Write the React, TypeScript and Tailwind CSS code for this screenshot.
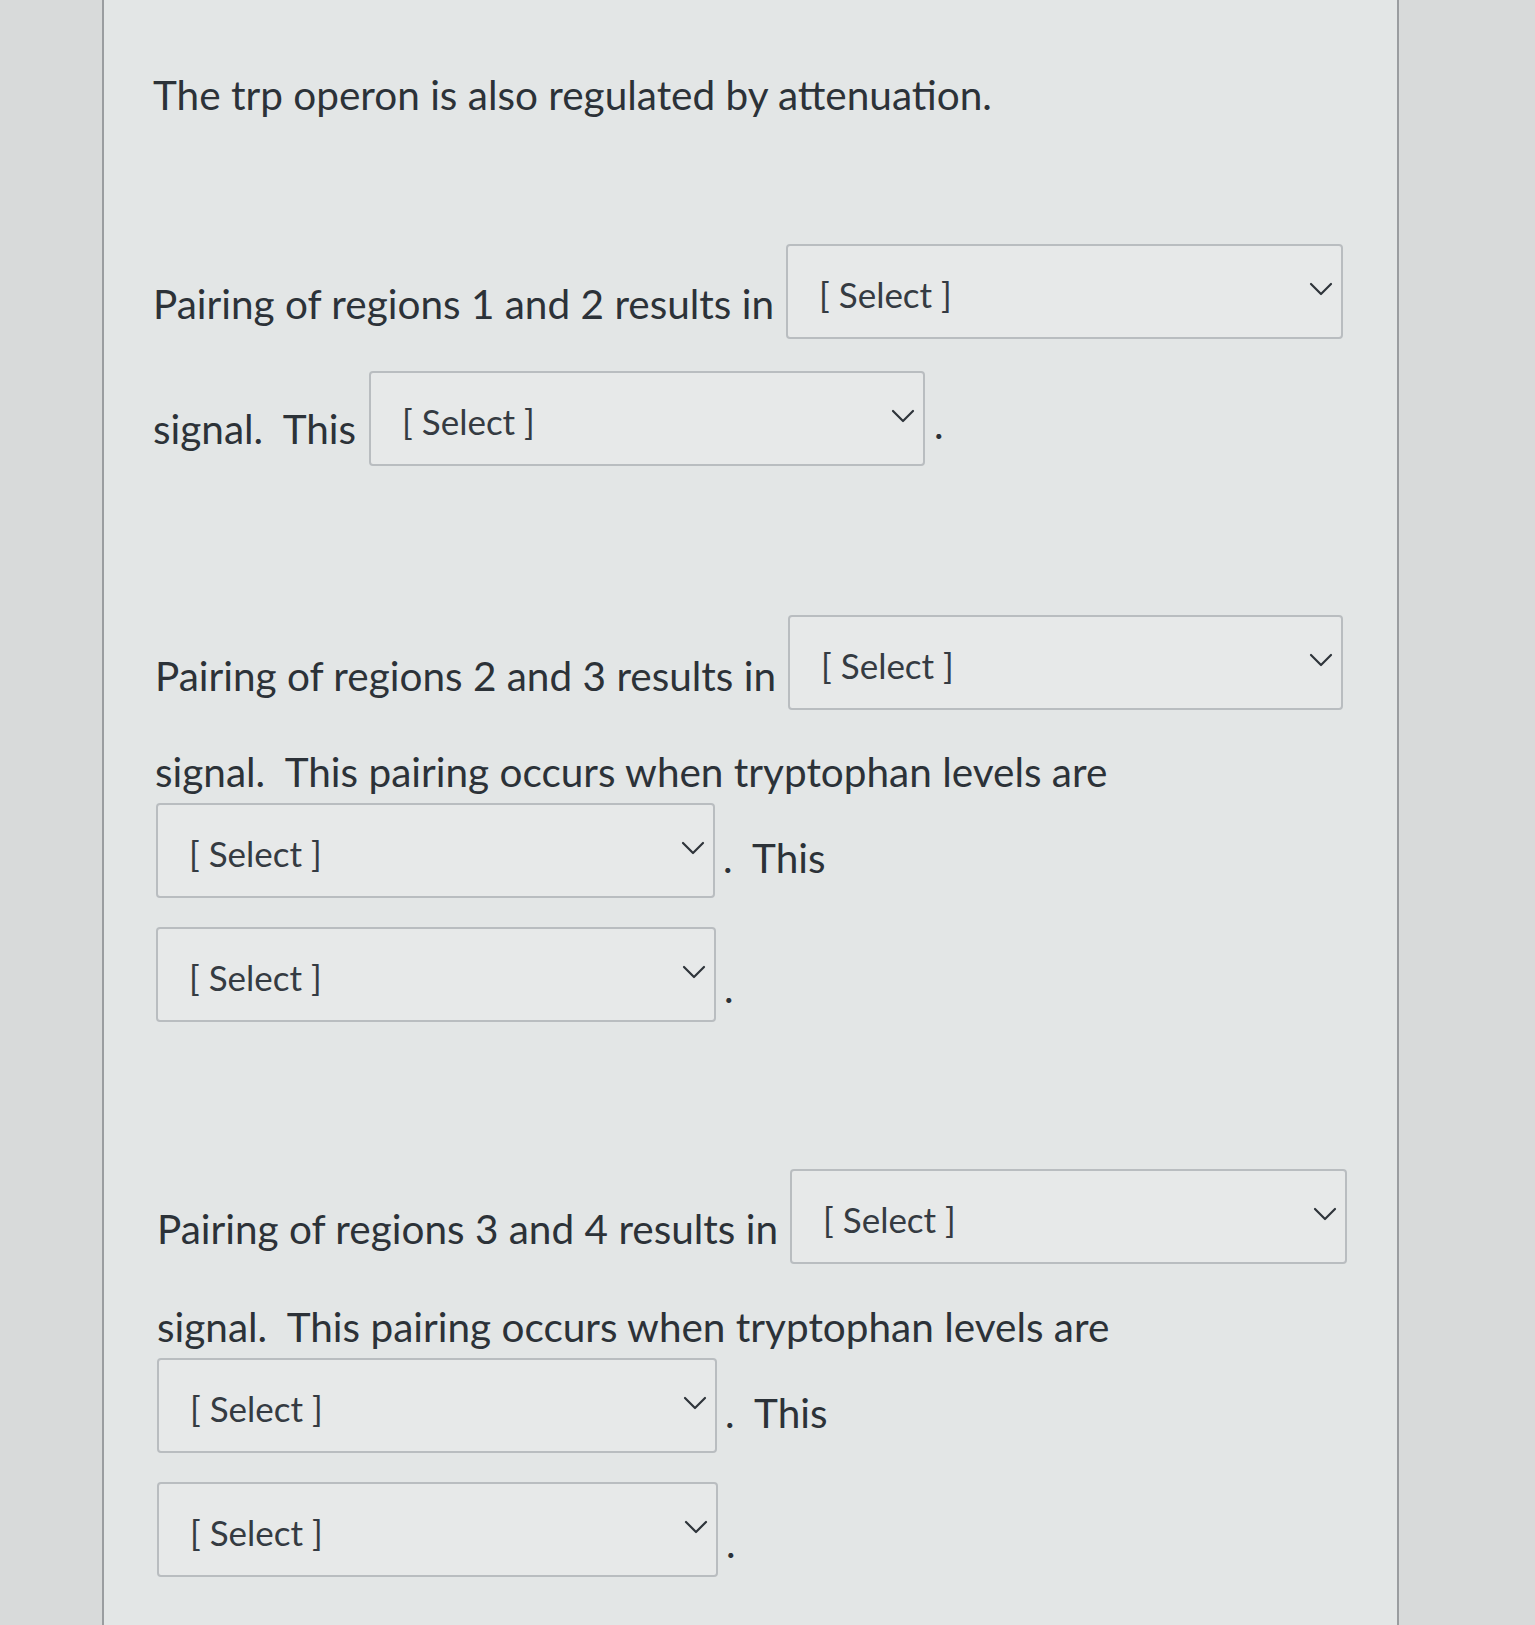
import React from "react";

function Chevron() {
  return (
    <svg width="24" height="14" viewBox="0 0 24 14" fill="none" className="shrink-0">
      <path d="M2 2 L12 12 L22 2" stroke="#2f353b" strokeWidth="2.2" strokeLinecap="round" strokeLinejoin="round" />
    </svg>
  );
}

function Sel({ w }: { w: string }) {
  return (
    <div
      className={`${w} h-[95px] shrink-0 flex items-center justify-between pl-[31px] pr-[8px] border-2 border-[#b9bdc0] rounded-[4px] bg-[#e7e9e9]`}
    >
      <span className="text-[35px] text-[#353b42] leading-none pt-[6px]">[ Select ]</span>
      <span className="-mt-[6px]"><Chevron /></span>
    </div>
  );
}

export default function App() {
  return (
    <div
      className="flex min-h-[1625px] bg-[#d8dada] text-[#2c3238]"
      style={{ fontFamily: "Lato, 'Open Sans', sans-serif" }}
    >
      <div className="w-[102px] shrink-0" />
      <div className="w-[1297px] shrink-0 border-l-2 border-r-2 border-[#9a9da0] bg-[#e3e6e6] pl-[49px] pt-[72px] whitespace-pre">
        <h1 className="text-[40.5px] leading-[46px] font-normal">The trp operon is also regulated by attenuation.</h1>

        {/* Paragraph 1 */}
        <div className="mt-[126px] flex flex-col gap-[32px]">
          <div className="flex items-center gap-[12px] text-[40.5px]">
            <span className="pt-[26px]">Pairing of regions 1 and 2 results in</span>
            <Sel w="w-[557px]" />
          </div>
          <div className="flex items-center gap-[13px] text-[40.5px]">
            <span className="pt-[22px]">signal.  This</span>
            <Sel w="w-[556px]" />
            <span className="-ml-[4px] pt-[12px]">.</span>
          </div>
        </div>

        {/* Paragraph 2 */}
        <div className="mt-[149px] flex flex-col">
          <div className="flex items-center gap-[12px] text-[40.5px] pl-[2px]">
            <span className="pt-[28px]">Pairing of regions 2 and 3 results in</span>
            <Sel w="w-[555px]" />
          </div>
          <div className="text-[40.5px] leading-[54px] mt-[35px] pl-[2px]">
            signal.  This pairing occurs when tryptophan levels are
          </div>
          <div className="flex items-center gap-[8px] text-[40.5px] mt-[4px] pl-[3px]">
            <Sel w="w-[559px]" />
            <span className="pt-[16px]">.  This</span>
          </div>
          <div className="flex items-center gap-[8px] text-[40.5px] mt-[29px] pl-[3px]">
            <Sel w="w-[560px]" />
            <span className="pt-[28px]">.</span>
          </div>
        </div>

        {/* Paragraph 3 */}
        <div className="mt-[147px] flex flex-col pb-[40px]">
          <div className="flex items-center gap-[12px] text-[40.5px] pl-[4px]">
            <span className="pt-[26px]">Pairing of regions 3 and 4 results in</span>
            <Sel w="w-[557px]" />
          </div>
          <div className="text-[40.5px] leading-[54px] mt-[36px] pl-[4px]">
            signal.  This pairing occurs when tryptophan levels are
          </div>
          <div className="flex items-center gap-[8px] text-[40.5px] mt-[4px] pl-[4px]">
            <Sel w="w-[560px]" />
            <span className="pt-[16px]">.  This</span>
          </div>
          <div className="flex items-center gap-[8px] text-[40.5px] mt-[29px] pl-[4px]">
            <Sel w="w-[561px]" />
            <span className="pt-[28px]">.</span>
          </div>
        </div>
      </div>
      <div className="flex-1" />
    </div>
  );
}
